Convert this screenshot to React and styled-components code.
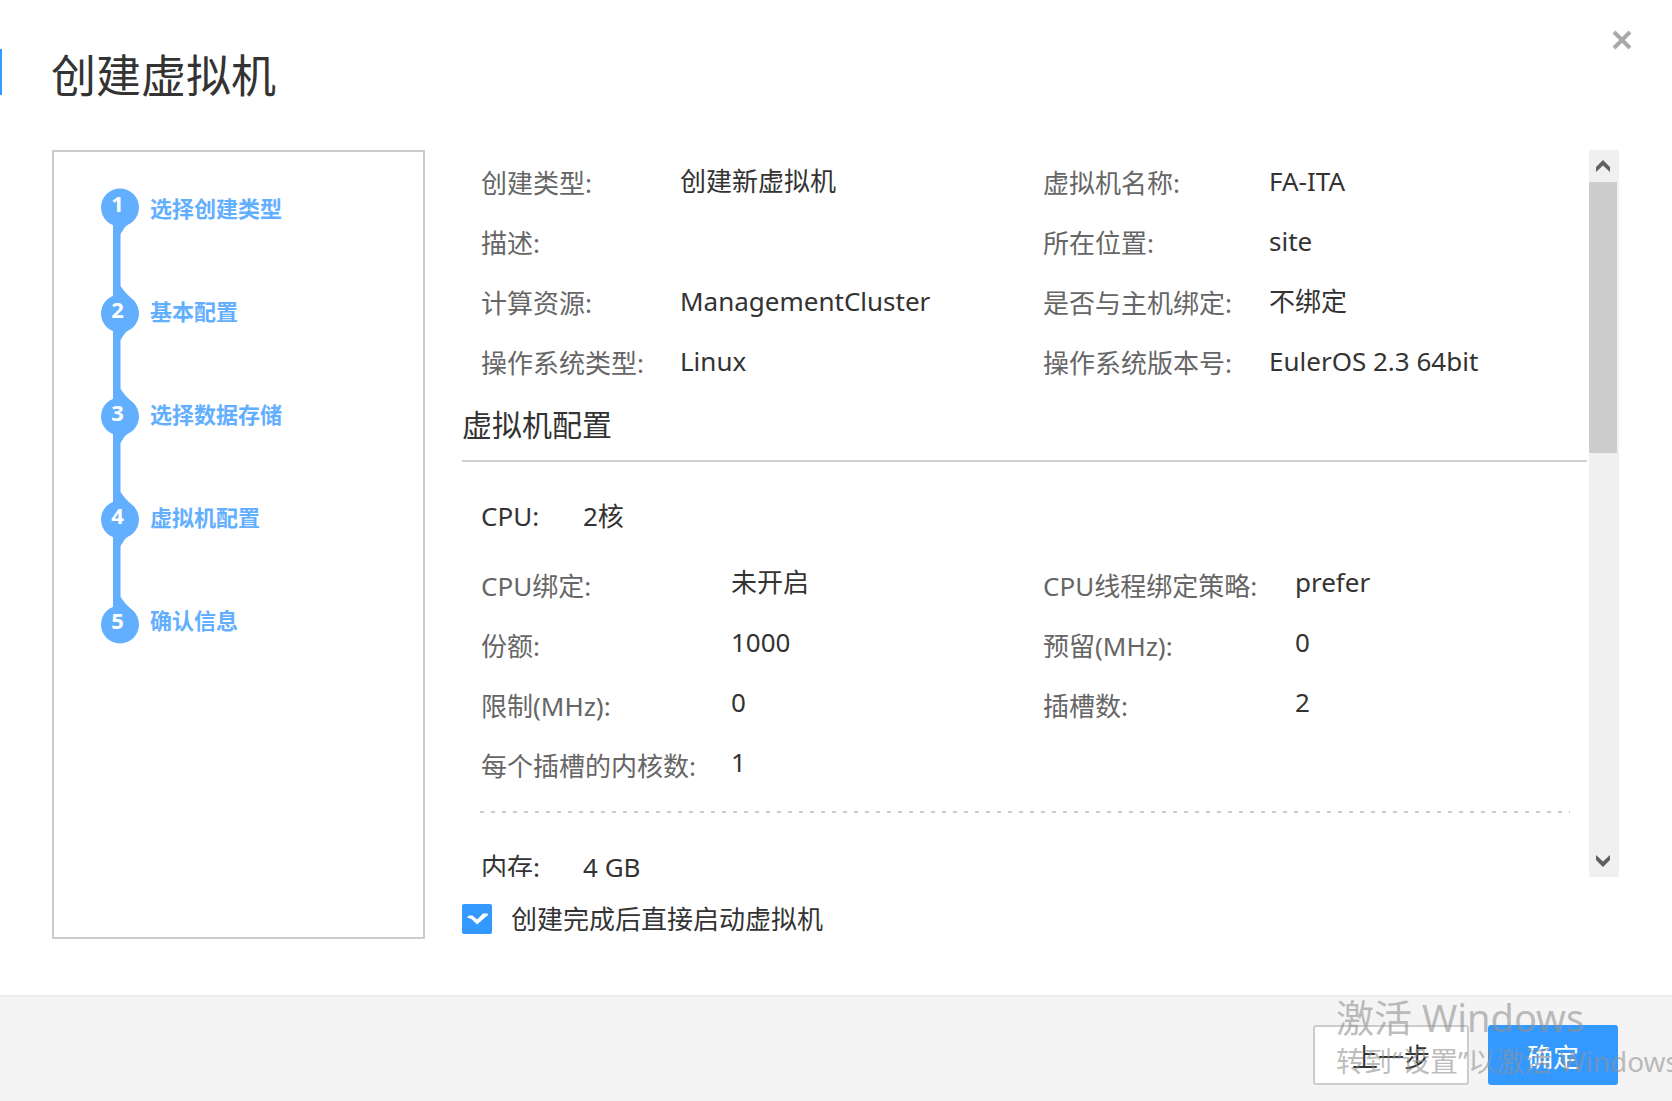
import React, { useRef, useState } from "react";
import styled, { createGlobalStyle } from "styled-components";

const GlobalStyle = createGlobalStyle`
  *, *::before, *::after { box-sizing: border-box; }
  html, body, #root { height: 100%; }
  body {
    margin: 0;
    overflow: hidden;
    background: #fff;
    color: #333;
    font: 400 26px/36px "Noto Sans", "Noto Sans CJK SC", sans-serif;
  }
  button, input { font: inherit; color: inherit; margin: 0; }
  h1, h2, dl, dd, ol { margin: 0; padding: 0; }
`;

const Dialog = styled.main`
  position: relative;
  display: flex;
  flex-direction: column;
  height: 100vh;
  min-height: 800px;
  overflow: hidden;
`;

const Header = styled.header`
  display: flex;
  align-items: flex-start;
  justify-content: space-between;
  height: 150px;
  padding: 24px 34px 0 0;
`;

const Title = styled.h1`
  height: 46px;
  margin-top: 25px;
  padding-left: 49px;
  border-left: 2px solid #3399ff;
  font-size: 45px;
  font-weight: 400;
  line-height: 54px;
`;

const CloseButton = styled.button`
  display: grid;
  place-items: center;
  width: 32px;
  height: 32px;
  padding: 0;
  border: 0;
  background: none;
  cursor: pointer;
`;

const Body = styled.div`
  display: flex;
  flex: 1;
  gap: 37px;
  min-height: 0;
  padding: 0 53px 56px 52px;
`;

const Steps = styled.ol`
  flex: none;
  width: 373px;
  padding: 36px 0 0 47px;
  border: 2px solid #ccc;
  list-style: none;
`;

const Step = styled.li`
  display: flex;
  gap: 10px;
  height: 103px;
  color: #62aeff;
  font-size: 22px;
  font-weight: 700;
  line-height: 40px;
`;

const Marker = styled.span`
  position: relative;
  flex: none;
  width: 39px;
  margin-top: ${(p) => p.$drop}px;
  text-align: center;
`;

const MarkerShape = styled.svg`
  position: absolute;
  top: 0;
  left: 0;
  overflow: visible;
`;

const MarkerNumber = styled.span`
  position: relative;
  display: block;
  padding-right: 6px;
  color: #fff;
  font-size: 22px;
  line-height: 30px;
`;

const Main = styled.section`
  display: flex;
  flex: 1;
  flex-direction: column;
  min-width: 0;
`;

const ScrollArea = styled.div`
  display: flex;
  flex: 1;
  gap: 2px;
  min-height: 0;
`;

const Content = styled.div`
  flex: 1;
  min-width: 0;
  overflow-y: auto;
  scrollbar-width: none;
`;

const Fields = styled.dl`
  display: grid;
  grid-template-columns: 562px 1fr;
  grid-auto-rows: 60px;
  padding-left: 19px;
`;

const Field = styled.div`
  display: grid;
  grid-template-columns: ${(p) => p.$label}px 1fr;
  align-items: start;
  white-space: nowrap;
`;

const Label = styled.dt`
  padding-top: 15px;
  color: #666;
`;

const Value = styled.dd`
  padding-top: ${(p) => (p.$raised ? 11 : 13)}px;
`;

const SectionTitle = styled.h2`
  height: 72px;
  padding-top: 17px;
  border-bottom: 2px solid #d0d0d0;
  font-size: 30px;
  font-weight: 400;
  line-height: 36px;
`;

const Summary = styled.div`
  display: grid;
  grid-template-columns: 102px 1fr;
  padding: 40px 0 23px 19px;
  line-height: 28px;
`;

const Divider = styled.hr`
  height: 2px;
  margin: 18px 17px 0 18px;
  border: 0;
  background: repeating-linear-gradient(90deg, #ccc 0 4px, transparent 4px 11px);
`;

const Scrollbar = styled.div`
  display: flex;
  flex: none;
  flex-direction: column;
  width: 30px;
  background: #f0f0f0;
`;

const ScrollButton = styled.button`
  display: grid;
  flex: none;
  place-items: center;
  width: 28px;
  height: 32px;
  padding: 0;
  border: 0;
  background: none;
`;

const Track = styled.div`
  flex: 1;
`;

const Thumb = styled.div`
  width: 28px;
  height: 271px;
  max-height: 100%;
  background: #cdcdcd;
`;

const StartOption = styled.label`
  display: flex;
  align-items: center;
  gap: 19px;
  padding: 24px 0 2px;
  cursor: pointer;
`;

const CheckWrap = styled.span`
  display: grid;
  width: 30px;
  height: 30px;

  & > * { grid-area: 1 / 1; }
  svg { pointer-events: none; }
`;

const Checkbox = styled.input`
  width: 30px;
  height: 30px;
  border: 2px solid #ccc;
  border-radius: 2px;
  background: #fff;
  appearance: none;

  &:checked { border-color: #3399ff; background: #3399ff; }
`;

const Footer = styled.footer`
  display: flex;
  flex: none;
  justify-content: flex-end;
  gap: 19px;
  height: 106px;
  padding: 28px 54px 0;
  border-top: 2px solid #ececec;
  background: #f4f4f4;
`;

const ActionButton = styled.button`
  height: 60px;
  padding: 4px 37px 0;
  border: 2px solid ${(p) => (p.$primary ? "#3399ff" : "#ccc")};
  border-radius: 3px;
  background: ${(p) => (p.$primary ? "#3399ff" : "#fff")};
  color: ${(p) => (p.$primary ? "#fff" : "#333")};
  cursor: pointer;
`;

const Watermark = styled.div`
  position: absolute;
  bottom: 19px;
  left: calc(100% - 336px);
  color: rgba(145, 145, 145, 0.6);
  font-size: 28px;
  line-height: 42px;
  white-space: nowrap;
  pointer-events: none;
`;

const WatermarkTitle = styled.div`
  font-size: 38px;
  line-height: 46px;
`;

const steps = ["选择创建类型", "基本配置", "选择数据存储", "虚拟机配置", "确认信息"];

const overview = [
  ["创建类型:", "创建新虚拟机"],
  ["虚拟机名称:", "FA-ITA"],
  ["描述:", ""],
  ["所在位置:", "site"],
  ["计算资源:", "ManagementCluster"],
  ["是否与主机绑定:", "不绑定"],
  ["操作系统类型:", "Linux"],
  ["操作系统版本号:", "EulerOS 2.3 64bit"],
];

const cpu = [
  ["CPU绑定:", "未开启"],
  ["CPU线程绑定策略:", "prefer"],
  ["份额:", "1000"],
  ["预留(MHz):", "0"],
  ["限制(MHz):", "0"],
  ["插槽数:", "2"],
  ["每个插槽的内核数:", "1"],
];

function StepMarker({ index, last }) {
  const drop = last ? 5 : index > 0 ? 3 : 0;
  return (
    <Marker $drop={drop}>
      <MarkerShape width="39" height="39" viewBox="0 0 39 39" fill="#62aeff" aria-hidden="true">
        <circle cx="19" cy="19.5" r="19" />
        {index > 0 && <path d="M12 -8H19.5L24 -2L34 8L20 20H12Z" />}
        {!last && <path d="M12 30V103H19.5V46L24 39L34 30Z" />}
      </MarkerShape>
      <MarkerNumber>{index + 1}</MarkerNumber>
    </Marker>
  );
}

function FieldList({ items, widths, raised }) {
  return (
    <Fields>
      {items.map(([label, value], i) => (
        <Field key={label} $label={widths[i % 2]}>
          <Label>{label}</Label>
          <Value $raised={raised}>{value}</Value>
        </Field>
      ))}
    </Fields>
  );
}

export default function App() {
  const content = useRef(null);
  const [autoStart, setAutoStart] = useState(true);
  const scroll = (top) => content.current.scrollBy({ top });

  return (
    <Dialog>
      <GlobalStyle />
      <Header>
        <Title>创建虚拟机</Title>
        <CloseButton aria-label="关闭">
          <svg width="20" height="20" viewBox="0 0 20 20" stroke="#aaa" strokeWidth="4" aria-hidden="true">
            <path d="M2 2L18 18M18 2L2 18" />
          </svg>
        </CloseButton>
      </Header>
      <Body>
        <Steps>
          {steps.map((name, i) => (
            <Step key={name}>
              <StepMarker index={i} last={i === steps.length - 1} />
              {name}
            </Step>
          ))}
        </Steps>
        <Main>
          <ScrollArea>
            <Content ref={content}>
              <FieldList items={overview} widths={[199, 226]} />
              <SectionTitle>虚拟机配置</SectionTitle>
              <Summary>
                <span>CPU:</span>
                <span>2核</span>
              </Summary>
              <FieldList items={cpu} widths={[250, 252]} raised />
              <Divider />
              <Summary>
                <span>内存:</span>
                <span>4 GB</span>
              </Summary>
            </Content>
            <Scrollbar>
              <ScrollButton aria-label="向上滚动" onClick={() => scroll(-60)}>
                <svg width="14" height="12" viewBox="0 0 14 12" fill="#606060" aria-hidden="true">
                  <path d="M7 0L14 7V12L7 5.5L0 12V7Z" />
                </svg>
              </ScrollButton>
              <Track>
                <Thumb />
              </Track>
              <ScrollButton aria-label="向下滚动" onClick={() => scroll(60)}>
                <svg width="14" height="12" viewBox="0 0 14 12" fill="#606060" aria-hidden="true">
                  <path d="M7 12L14 5V0L7 6.5L0 0V5Z" />
                </svg>
              </ScrollButton>
            </Scrollbar>
          </ScrollArea>
          <StartOption>
            <CheckWrap>
              <Checkbox type="checkbox" checked={autoStart} onChange={(e) => setAutoStart(e.target.checked)} />
              <svg width="30" height="30" viewBox="0 0 30 30" fill="#fff" aria-hidden="true">
                <path d="M5 13.500L7 11.500H10.500L15 15.500L21 9.500H25L26.500 10.500L15 20.500L9.500 15Z" />
              </svg>
            </CheckWrap>
            创建完成后直接启动虚拟机
          </StartOption>
        </Main>
      </Body>
      <Footer>
        <ActionButton>上一步</ActionButton>
        <ActionButton $primary>确定</ActionButton>
      </Footer>
      <Watermark>
        <WatermarkTitle>激活 Windows</WatermarkTitle>
        转到“设置”以激活 Windows。
      </Watermark>
    </Dialog>
  );
}
